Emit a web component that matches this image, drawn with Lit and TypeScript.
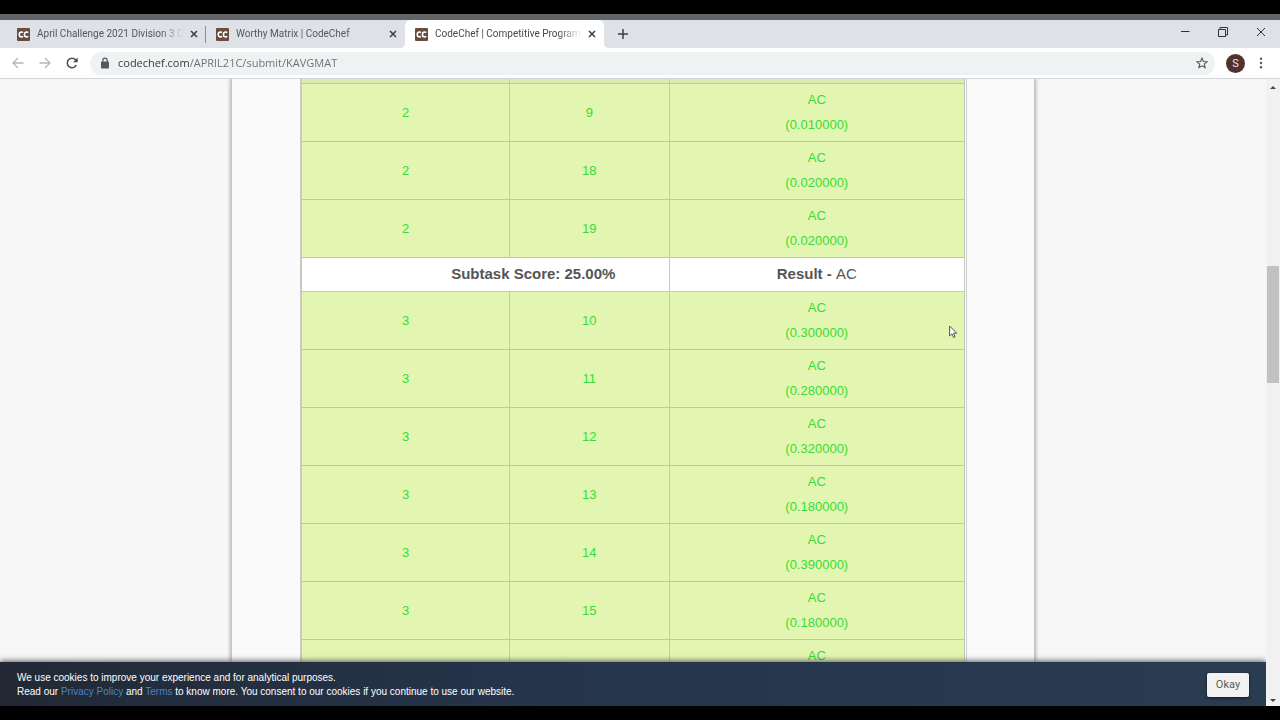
import { LitElement, html, css, svg, nothing } from "lit";
import { customElement, property } from "lit/decorators.js";

interface TestRow {
  task: string;
  test: string;
  time: string;
}

const SECOND: TestRow[] = [
  { task: "2", test: "9", time: "(0.010000)" },
  { task: "2", test: "18", time: "(0.020000)" },
  { task: "2", test: "19", time: "(0.020000)" },
];

const THIRD: TestRow[] = [
  { task: "3", test: "10", time: "(0.300000)" },
  { task: "3", test: "11", time: "(0.280000)" },
  { task: "3", test: "12", time: "(0.320000)" },
  { task: "3", test: "13", time: "(0.180000)" },
  { task: "3", test: "14", time: "(0.390000)" },
  { task: "3", test: "15", time: "(0.180000)" },
  { task: "", test: "", time: "" },
];

const closeIcon = html`<svg width="12" height="12" viewBox="0 0 12 12" aria-hidden="true">
  <path d="M3 3l6 6M9 3l-6 6" stroke="#3a3d40" stroke-width="1.5" fill="none" />
</svg>`;

@customElement("browser-tab")
export class BrowserTab extends LitElement {
  @property() label = "";
  @property({ type: Boolean, reflect: true }) active = false;
  @property({ type: Boolean, reflect: true }) divided = false;

  static styles = css`
    :host {
      display: flex;
      align-items: center;
      box-sizing: border-box;
      width: 199px;
      height: 28px;
      padding: 0 6px 0 10px;
      position: relative;
      font: 10px/16px Roboto, sans-serif;
      color: #54585c;
    }
    :host([active]) {
      background: #fff;
      border-radius: 6px 6px 0 0;
      color: #45494d;
    }
    :host([active])::before,
    :host([active])::after {
      content: "";
      position: absolute;
      bottom: 0;
      width: 5px;
      height: 5px;
    }
    :host([active])::before {
      right: 100%;
      background: radial-gradient(circle at 0 0, transparent 5px, #fff 5px);
    }
    :host([active])::after {
      left: 100%;
      background: radial-gradient(circle at 100% 0, transparent 5px, #fff 5px);
    }
    :host([divided])::after {
      content: "";
      position: absolute;
      right: 0;
      top: 6px;
      width: 1px;
      height: 17px;
      background: #8b9095;
    }
    button {
      border: 0;
      padding: 0;
      background: none;
      font: inherit;
      color: inherit;
      text-align: left;
    }
    .title {
      flex: 1;
      min-width: 0;
      margin: 0 4px 0 7px;
      overflow: hidden;
      white-space: nowrap;
      mask-image: linear-gradient(to right, #000 calc(100% - 24px), transparent);
    }
    .close {
      width: 12px;
      height: 12px;
    }
    svg {
      display: block;
      flex: none;
    }
  `;

  render() {
    return html`
      <svg width="13" height="13" viewBox="0 0 13 13" aria-hidden="true">
        <rect width="13" height="13" rx="1" fill="#674d3f" />
        <path
          d="M6 4.6C5.300 3.800 2.200 3.600 2.200 6.400S5.200 9.200 6 8.300M11.200 4.600C10.500 3.800 7.400 3.600 7.400 6.400S10.400 9.200 11.200 8.300"
          stroke="#fff"
          stroke-width="1.6"
          fill="none"
        />
      </svg>
      <button class="title">${this.label}</button>
      <button class="close" aria-label="Close tab">${closeIcon}</button>
    `;
  }
}

@customElement("result-table")
export class ResultTable extends LitElement {
  static styles = css`
    :host {
      display: block;
      border-right: 1px solid #cfcfcf;
    }
    table {
      width: 100%;
      table-layout: fixed;
      border-collapse: separate;
      border-spacing: 0;
      border-left: 1px solid #c8cac4;
      padding-right: 1px;
      font: 13px/25px "Liberation Sans", Arial, sans-serif;
      color: #37dc37;
      text-align: center;
    }
    td,
    th {
      box-sizing: border-box;
      padding: 0 0 1px;
      border-right: 1px solid #c3c7bb;
      border-bottom: 1px solid #bfc5b2;
      font-weight: 400;
    }
    td:first-child,
    th:first-child {
      border-left: 1px solid #c8ccbe;
    }
    .task {
      width: 31.5%;
    }
    .test {
      width: 24%;
    }
    .edge td {
      height: 5px;
      background: #dcebb0;
    }
    .case td {
      height: 58px;
      background: #e3f6b1;
    }
    .score th {
      height: 34px;
      background: #fff;
      border-color: #c6c8c4;
      font-size: 15px;
      line-height: 24px;
      color: #555;
    }
    .score .total {
      padding-left: 96px;
    }
    .time {
      display: block;
      min-height: 25px;
    }
  `;

  private row(r: TestRow) {
    return html`<tr class="case">
      <td>${r.task}</td>
      <td>${r.test}</td>
      <td>AC<span class="time">${r.time || nothing}</span></td>
    </tr>`;
  }

  render() {
    return html`<table>
      <colgroup>
        <col class="task" />
        <col class="test" />
        <col />
      </colgroup>
      <tbody>
        <tr class="edge"><td></td><td></td><td></td></tr>
        ${SECOND.map((r) => this.row(r))}
        <tr class="score">
          <th class="total" colspan="2"><b>Subtask Score: 25.00%</b></th>
          <th><b>Result - </b>AC</th>
        </tr>
        ${THIRD.map((r) => this.row(r))}
      </tbody>
    </table>`;
  }
}

@customElement("app-root")
export class AppRoot extends LitElement {
  static styles = css`
    :host {
      display: flex;
      flex-direction: column;
      box-sizing: border-box;
      height: 100vh;
      padding: 14px 0;
      background: #000;
      overflow: hidden;
      font-family: "Open Sans", "Noto Sans", sans-serif;
    }
    button {
      border: 0;
      padding: 0;
      background: none;
      font: inherit;
      color: inherit;
    }
    svg {
      display: block;
    }
    .strip {
      display: flex;
      align-items: center;
      height: 28px;
      flex: none;
      padding-left: 7px;
      border-top: 6px solid #626568;
      background: #dee1e6;
    }
    .plus {
      margin-left: 13px;
    }
    .controls {
      display: flex;
      margin-left: auto;
      align-self: flex-start;
    }
    .controls button {
      display: grid;
      place-items: center;
      width: 38px;
      height: 24px;
    }
    .toolbar {
      display: flex;
      align-items: center;
      flex: none;
      height: 30px;
      padding: 0 13px 0 4px;
      background: #fff;
      border-bottom: 1px solid #d4d6d8;
    }
    .nav {
      display: grid;
      place-items: center;
      width: 27px;
      height: 26px;
    }
    .omnibox {
      flex: 1;
      display: flex;
      align-items: center;
      box-sizing: border-box;
      height: 23px;
      margin: 0 11px 0 5px;
      padding: 0 7px 0 9px;
      border-radius: 12px;
      background: #eff2f3;
    }
    .address {
      flex: 1;
      min-width: 0;
      margin-left: 7px;
      padding: 0;
      border: 0;
      outline: 0;
      font: 11px/18px "Open Sans", "Noto Sans", sans-serif;
      color: transparent;
      background: linear-gradient(to right, #303336 72px, #6a6e72 72px);
      -webkit-background-clip: text;
      background-clip: text;
    }
    .avatar {
      width: 19px;
      height: 19px;
      border-radius: 50%;
      background: #50322f;
      color: #f3e6e4;
      font: 11px/19px Roboto, sans-serif;
      text-align: center;
    }
    .menu {
      margin-left: 10px;
    }
    .window {
      flex: 1;
      min-height: 0;
      display: flex;
      background: #f7f7f7;
    }
    .view {
      flex: 1;
      min-width: 0;
      display: flex;
      flex-direction: column;
      position: relative;
    }
    .page {
      flex: 1;
      min-height: 0;
      overflow: hidden;
    }
    .sheet {
      box-sizing: border-box;
      width: 100%;
      max-width: 804px;
      height: 100%;
      margin: 0 auto;
      padding: 0 67px 0 68px;
      background: #fafafa;
      border: solid #c6c6c6;
      border-width: 0 1px;
      box-shadow: 0 0 4px #8a8a8a;
    }
    .cookies {
      display: flex;
      align-items: center;
      justify-content: space-between;
      flex: none;
      height: 44px;
      padding: 0 17px;
      position: relative;
      box-shadow: 0 -1px 6px #555;
      clip-path: inset(-10px 0 0 0);
      background: linear-gradient(to right, #222935, #25344b 40%, #293c52);
      color: #fff;
      font: 10px/14px "Liberation Sans", Arial, sans-serif;
    }
    .cookies p {
      margin: 2px 0 0;
    }
    .cookies a {
      color: #4a84c4;
      text-decoration: none;
    }
    .okay {
      width: 42px;
      height: 24px;
      margin-top: 2px;
      border-radius: 2px;
      background: #f2f2f2;
      box-shadow: 0 1px 3px #0009;
      color: #5c5c5c;
      font: 11px/24px Roboto, sans-serif;
    }
    .scroll {
      display: flex;
      flex-direction: column;
      align-items: center;
      width: 14px;
      background: #f1f1f1;
    }
    .scroll svg {
      flex: none;
    }
    .track {
      flex: 1;
      display: grid;
      grid-template-rows: 172fr 117fr 308fr;
    }
    .thumb {
      grid-row: 2;
      width: 12px;
      background: #c1c1c1;
    }
    .pointer {
      position: absolute;
      left: 949px;
      top: 246px;
    }
  `;

  private arrow(d: string, color: string) {
    return html`<svg width="14" height="14" viewBox="0 0 14 14" aria-hidden="true">
      ${svg`<path d=${d} stroke=${color} stroke-width="1.3" fill="none" />`}
    </svg>`;
  }

  render() {
    return html`
      <header class="strip">
        <browser-tab divided label="April Challenge 2021 Division 3 Contest"></browser-tab>
        <browser-tab label="Worthy Matrix | CodeChef"></browser-tab>
        <browser-tab active label="CodeChef | Competitive Programming"></browser-tab>
        <button class="plus" aria-label="New tab">
          <svg width="12" height="12" viewBox="0 0 12 12">
            <path d="M6 1v10M1 6h10" stroke="#3c4043" stroke-width="1.5" />
          </svg>
        </button>
        <div class="controls">
          <button aria-label="Minimize">
            <svg width="10" height="10" viewBox="0 0 10 10"><path d="M1 4.500h8.500" stroke="#333" /></svg>
          </button>
          <button aria-label="Restore">
            <svg width="10" height="10" viewBox="0 0 10 10" fill="none" stroke="#333">
              <path d="M.5 2.500h7v7h-7zM2 2.500v-2h7.500v7.500h-2" />
            </svg>
          </button>
          <button aria-label="Close">
            <svg width="10" height="10" viewBox="0 0 10 10"><path d="M1 1l8 8M9 1l-8 8" stroke="#333" /></svg>
          </button>
        </div>
      </header>

      <div class="toolbar">
        <button class="nav" aria-label="Back">${this.arrow("M12.500 7H2.500M7 2L2 7l5 5", "#b4b6b8")}</button>
        <button class="nav" aria-label="Forward">${this.arrow("M1.500 7h10M7 2l5 5-5 5", "#b4b6b8")}</button>
        <button class="nav" aria-label="Reload">
          <svg width="14" height="14" viewBox="0 0 14 14">
            <path d="M11.300 9.200A4.800 4.800 0 1 1 10.600 3.700L12 5.100" stroke="#4a4d50" stroke-width="1.5" fill="none" />
            <path d="M12.700 1.500v4.700H8z" fill="#4a4d50" />
          </svg>
        </button>
        <div class="omnibox">
          <svg width="12" height="12" viewBox="0 0 12 12" aria-hidden="true">
            <rect x="2" y="4.500" width="8" height="7" rx="1" fill="#54585c" />
            <path d="M3.800 5V3.300a2.200 2.200 0 0 1 4.400 0V5" stroke="#54585c" stroke-width="1.200" fill="none" />
          </svg>
          <input class="address" aria-label="Address" value="codechef.com/APRIL21C/submit/KAVGMAT" />
          <button aria-label="Bookmark this page">
            <svg width="12" height="12" viewBox="0 0 12 12">
              <path
                d="M6 1.200l1.400 3.300 3.600.3-2.700 2.400.8 3.500L6 8.800l-3.100 1.900.8-3.500L1 4.800l3.600-.3z"
                stroke="#54585c"
                stroke-width="1.100"
                fill="none"
              />
            </svg>
          </button>
        </div>
        <button class="avatar" aria-label="Profile">S</button>
        <button class="menu" aria-label="Menu">
          <svg width="12" height="12" viewBox="0 0 12 12" fill="#54585c">
            <circle cx="6" cy="1.800" r="1.200" />
            <circle cx="6" cy="6" r="1.200" />
            <circle cx="6" cy="10.200" r="1.200" />
          </svg>
        </button>
      </div>

      <div class="window">
        <main class="view">
          <div class="page">
            <div class="sheet"><result-table></result-table></div>
          </div>
          <section class="cookies" aria-label="Cookie notice">
            <p>
              We use cookies to improve your experience and for analytical purposes.<br />
              Read our <a href="#privacy">Privacy Policy</a> and <a href="#terms">Terms</a> to know more. You consent to
              our cookies if you continue to use our website.
            </p>
            <button class="okay">Okay</button>
          </section>
          <svg class="pointer" width="9" height="14" viewBox="0 0 9 14" aria-hidden="true">
            <path
              d="M.6 1v10l2.300-2.200 1.600 3.700 1.600-.7-1.600-3.600h3.200z"
              fill="#fff"
              stroke="#444"
              stroke-width=".9"
            />
          </svg>
        </main>
        <div class="scroll" aria-hidden="true">
          <svg width="14" height="15" viewBox="0 0 14 15"><path d="M4 10l3-3 3 3z" fill="#444" /></svg>
          <div class="track"><div class="thumb"></div></div>
          <svg width="14" height="15" viewBox="0 0 14 15"><path d="M4 8l3 3 3-3z" fill="#444" /></svg>
        </div>
      </div>
    `;
  }
}
